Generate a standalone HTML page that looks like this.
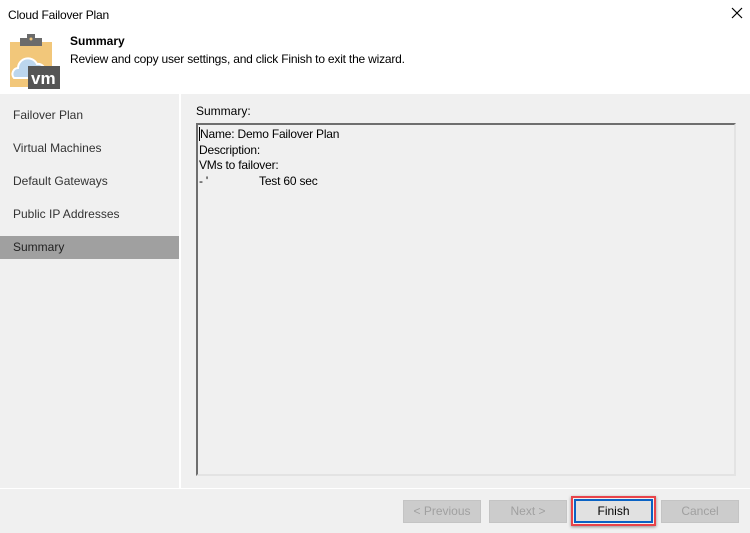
<!DOCTYPE html>
<html><head><style>
body{margin:0;width:750px;height:533px;background:#f0f0f0;font-family:"Liberation Sans",sans-serif;font-size:12px;color:#000;position:relative;overflow:hidden}
div{position:absolute;box-sizing:border-box}
.nav{left:13px;color:#333}
.btn{top:500px;height:23px;width:78px;background:#ccc;border:1px solid #c4c4c4;color:#a0a0a0;text-align:center;line-height:21px}
</style></head><body>
<div style="left:0;top:0;width:750px;height:94px;background:#fff"></div>
<div style="left:8px;top:8px;font-size:12px;letter-spacing:-0.2px">Cloud Failover Plan</div>
<svg style="position:absolute;left:731px;top:7px" width="12" height="12"><path d="M1 1L11 11M11 1L1 11" stroke="#000" stroke-width="1.2"/></svg>
<svg style="position:absolute;left:10px;top:34px" width="50" height="55">
<rect x="0" y="8" width="42" height="45" fill="#f2c77a"/>
<rect x="10" y="4" width="22" height="8" fill="#6b6b6b"/>
<rect x="17" y="0" width="8" height="6" fill="#6b6b6b"/>
<circle cx="21" cy="5" r="1.5" fill="#f2c77a"/>
<path d="M4 44 a6 6 0 0 1 4-10 a10 10 0 0 1 19-4 a7 7 0 0 1 8 8 a5 5 0 0 1 0 6 z" fill="#bcd6ee" stroke="#fff" stroke-width="2"/>
<rect x="18" y="32" width="32" height="23" fill="#555"/>
<text x="21" y="50" font-family="Liberation Sans" font-size="17" font-weight="bold" fill="#fff">vm</text>
</svg>
<div style="left:70px;top:34px;font-weight:bold">Summary</div>
<div style="left:70px;top:52px;letter-spacing:-0.2px">Review and copy user settings, and click Finish to exit the wizard.</div>
<div style="left:179px;top:94px;width:2px;height:394px;background:#fff"></div>
<div class="nav" style="top:108px">Failover Plan</div>
<div class="nav" style="top:141px">Virtual Machines</div>
<div class="nav" style="top:174px">Default Gateways</div>
<div class="nav" style="top:207px">Public IP Addresses</div>
<div style="left:0;top:236px;width:179px;height:23px;background:#a0a0a0"></div>
<div class="nav" style="top:240px;color:#222">Summary</div>
<div style="left:196px;top:104px">Summary:</div>
<div style="left:196px;top:123px;width:540px;height:353px;border:2px solid #6e6e6e;border-right-color:#e3e3e3;border-bottom-color:#e3e3e3;padding:2px 0 0 1px;line-height:15.5px;background:#f0f0f0;letter-spacing:-0.2px">
<span style="border-left:1px solid #000">Name: Demo Failover Plan</span><br>Description:<br>VMs to failover:<br>- '<span style="display:inline-block;width:51px"></span>Test 60 sec</div>
<div style="left:0;top:488px;width:750px;height:1px;background:#fff"></div>
<div class="btn" style="left:403px">&lt; Previous</div>
<div class="btn" style="left:489px">Next &gt;</div>
<div style="left:571px;top:496px;width:85px;height:30px;border:2px solid #e8434a;box-shadow:0 1px 3px rgba(0,0,0,.4)"></div>
<div class="btn" style="left:574px;top:499px;width:79px;height:24px;background:#e1e1e1;border:2px solid #0a62c4;color:#000;line-height:20px">Finish</div>
<div class="btn" style="left:661px">Cancel</div>
</body></html>
